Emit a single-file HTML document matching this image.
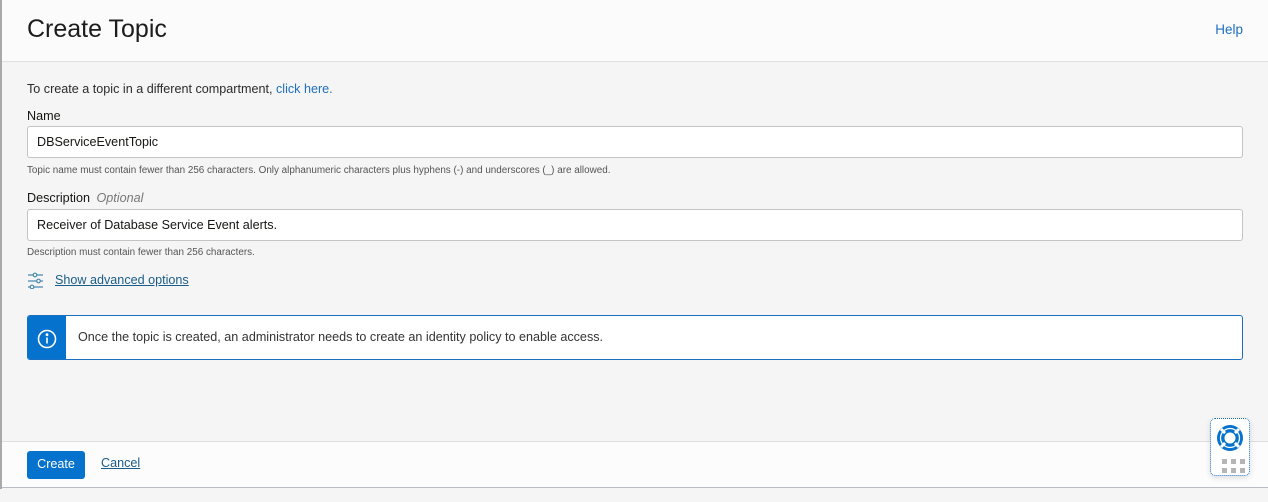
<!DOCTYPE html>
<html><head><style>
*{box-sizing:border-box;margin:0;padding:0}
body{width:1268px;height:502px;overflow:hidden;font-family:"Liberation Sans",Arial,sans-serif;background:#f5f5f5;position:relative;color:#161513}
.lb{position:absolute;left:0;top:0;width:2px;height:489px;background:#a9a9a9}
.hdr{position:absolute;left:2px;top:0;width:1266px;height:62px;background:#fbfbfb;border-bottom:1px solid #e0e0e0}
.hdr h1{position:absolute;left:25px;top:15px;font-size:25px;font-weight:normal;color:#1c1c1c}
.hdr a{position:absolute;right:25px;top:22px;font-size:13.5px;color:#1e6fbf;text-decoration:none}
.t{position:absolute;font-size:12.6px;color:#2b2b2b}
.small{position:absolute;font-size:9.9px;color:#555}
.inp{position:absolute;left:27px;width:1216px;height:32px;background:#fff;border:1px solid #c4c4c4;border-radius:3px;font-size:12.6px;padding:8px 9px;color:#161513}
.info{position:absolute;left:27px;top:315px;width:1216px;height:45px;border:1px solid #1a6ec2;border-radius:3px;background:#fff;overflow:hidden}
.info .ic{position:absolute;left:0;top:0;width:38px;height:45px;background:#0572ce;display:flex;align-items:center;justify-content:center}
.info span{position:absolute;left:50px;top:14px;font-size:12.6px;color:#333}
.ftr{position:absolute;left:2px;top:441px;width:1266px;height:47px;background:#fcfcfc;border-top:1px solid #e0e0e0;border-bottom:1px solid #b8bcc4}
.btn{position:absolute;left:25px;top:9px;width:58px;height:28px;background:#0572ce;color:#fff;border-radius:3px;font-size:12.6px;text-align:center;line-height:27px}
.cancel{position:absolute;left:99px;top:14px;font-size:12.6px;color:#1a5d8a;text-decoration:underline}
.help{position:absolute;left:1210px;top:418px;width:40px;height:58px;border:1px dotted #1a6ec2;border-radius:5px;background:#fff;box-shadow:0 2px 6px rgba(0,0,0,.12)}
.g{position:absolute;left:11px;top:40px;display:grid;grid-template-columns:repeat(3,5px);gap:4px 4px}
.g i{display:block;width:5px;height:5px;background:#b5b5b5}
</style></head><body>
<div class="lb"></div>
<div class="hdr"><h1>Create Topic</h1><a>Help</a></div>
<div class="t" style="left:27px;top:82px">To create a topic in a different compartment, <span style="color:#1e6fbf">click here.</span></div>
<div class="t" style="left:27px;top:109px;color:#161513">Name</div>
<div class="inp" style="top:126px">DBServiceEventTopic</div>
<div class="small" style="left:27px;top:165px">Topic name must contain fewer than 256 characters. Only alphanumeric characters plus hyphens (-) and underscores (_) are allowed.</div>
<div class="t" style="left:27px;top:191px;color:#161513">Description <i style="color:#777;margin-left:3px">Optional</i></div>
<div class="inp" style="top:209px">Receiver of Database Service Event alerts.</div>
<div class="small" style="left:27px;top:247px">Description must contain fewer than 256 characters.</div>
<svg style="position:absolute;left:27px;top:272px" width="17" height="17" viewBox="0 0 17 17" fill="none" stroke="#4a8ab0" stroke-width="1.2"><path d="M1 3h5M10 3h6M1 9h9M13 9h3M1 15h2M7 15h9"/><circle cx="8" cy="3" r="1.8"/><circle cx="11.5" cy="9" r="1.8"/><circle cx="5" cy="15" r="1.8"/></svg>
<div class="t" style="left:55px;top:273px;color:#1a5d8a;text-decoration:underline">Show advanced options</div>
<div class="info"><div class="ic"><svg width="20" height="20" viewBox="0 0 20 20" fill="none" stroke="#fff" stroke-width="1.6"><circle cx="10" cy="10" r="8.5"/><path d="M10 8.5v6"/><circle cx="10" cy="5.7" r="0.6" fill="#fff"/></svg></div><span>Once the topic is created, an administrator needs to create an identity policy to enable access.</span></div>
<div class="ftr"><div class="btn">Create</div><div class="cancel">Cancel</div></div>
<div class="help"><svg style="position:absolute;left:5px;top:5px" width="28" height="28" viewBox="0 0 28 28"><circle cx="14" cy="14" r="13" fill="#0572ce"/><path d="M5 5L23 23M23 5L5 23" stroke="#fff" stroke-width="3"/><circle cx="14" cy="14" r="9.5" fill="none" stroke="#fff" stroke-width="1.3"/><circle cx="14" cy="14" r="7" fill="#0572ce"/><circle cx="14" cy="14" r="5.5" fill="#fff"/></svg>
<div class="g"><i></i><i></i><i></i><i></i><i></i><i></i></div></div>
</body></html>
